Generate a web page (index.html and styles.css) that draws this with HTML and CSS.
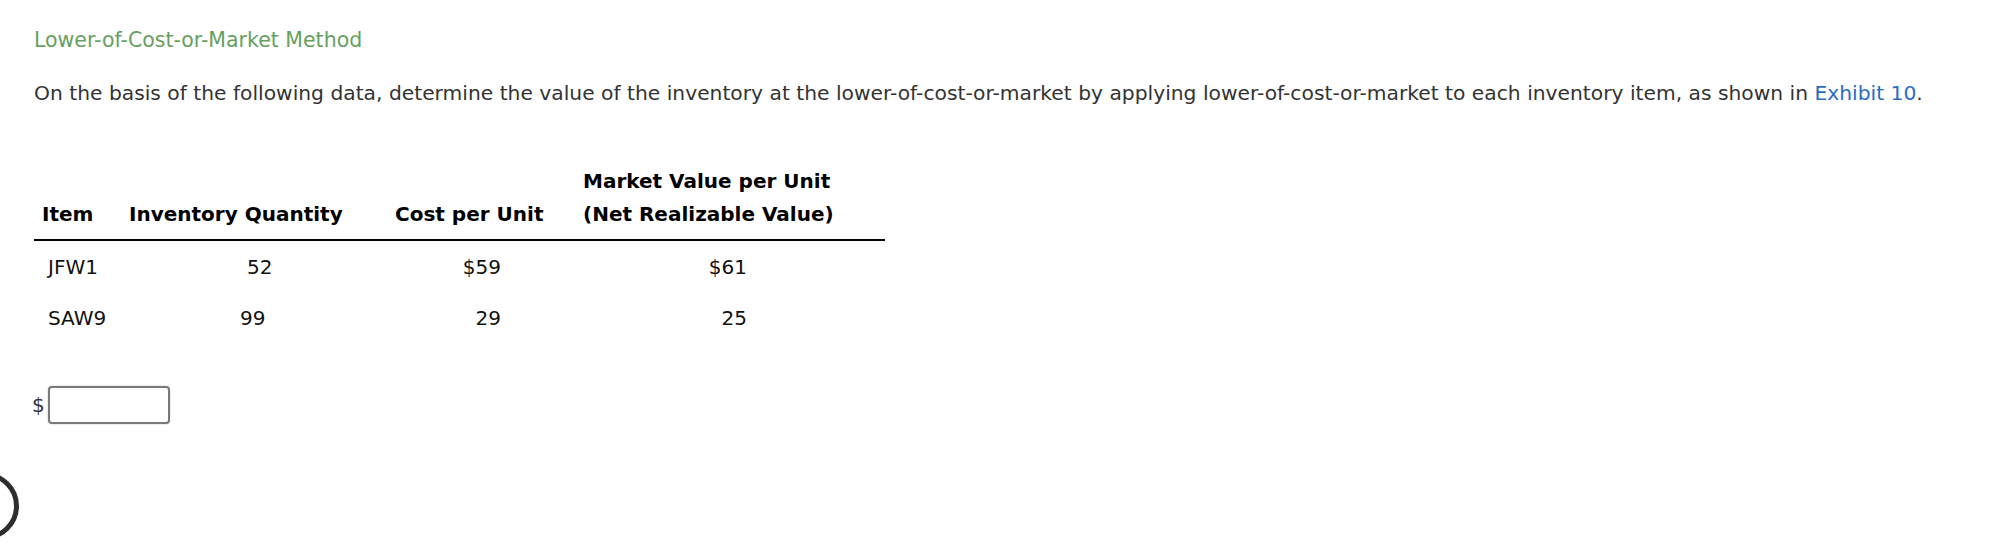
FILE: index.html
```html
<!DOCTYPE html>
<html lang="en">
<head>
<meta charset="utf-8">
<title>Lower-of-Cost-or-Market Method</title>
<link rel="stylesheet" href="styles.css">
</head>
<body>
<div class="page">
  <h1 class="title">Lower-of-Cost-or-Market Method</h1>
  <p class="prompt">On the basis of the following data, determine the value of the inventory at the lower-of-cost-or-market by applying lower-of-cost-or-market to each inventory item, as shown in <a class="link" href="#">Exhibit 10</a>.</p>

  <table class="data">
    <colgroup>
      <col class="col-item">
      <col class="col-qty">
      <col class="col-cost">
      <col class="col-mkt">
    </colgroup>
    <thead>
      <tr>
        <th>Item</th>
        <th>Inventory Quantity</th>
        <th>Cost per Unit</th>
        <th>Market Value per Unit<br>(Net Realizable Value)</th>
      </tr>
    </thead>
    <tbody>
      <tr>
        <td class="c-item">JFW1</td>
        <td class="c-qty">52</td>
        <td class="c-cost">$59</td>
        <td class="c-mkt">$61</td>
      </tr>
      <tr>
        <td class="c-item">SAW9</td>
        <td class="c-qty c-qty--alt">99</td>
        <td class="c-cost">29</td>
        <td class="c-mkt">25</td>
      </tr>
    </tbody>
  </table>

  <div class="answer">
    <span class="currency">$</span>
    <input class="answer-input" type="text" aria-label="Inventory value">
  </div>
</div>
<div class="ring"></div>
</body>
</html>
```

FILE: styles.css
```css
html, body {
  margin: 0;
  padding: 0;
  background: #ffffff;
}

body {
  font-family: "DejaVu Sans", Verdana, sans-serif;
  color: #333333;
  width: 1990px;
  height: 550px;
  overflow: hidden;
  position: relative;
}

.page {
  padding: 28px 0 0 34px;
}

.title {
  margin: 0 0 29px 0;
  font-size: 20.5px;
  line-height: 24px;
  font-weight: normal;
  color: #67a05f;
}

.prompt {
  margin: 0;
  font-size: 20.25px;
  line-height: 24px;
  color: #333333;
  white-space: nowrap;
}

.link {
  color: #2a6bc4;
  text-decoration: none;
}

.data {
  margin: 60px 0 0 0;
  border-collapse: collapse;
  table-layout: fixed;
  width: 851px;
  color: #000000;
  font-size: 20px;
}

.col-item { width: 87px; }
.col-qty { width: 266px; }
.col-cost { width: 188px; }
.col-mkt { width: 310px; }

.data th,
.data td {
  box-sizing: border-box;
}

.data th {
  font-weight: bold;
  line-height: 33px;
  text-align: left;
  vertical-align: bottom;
  padding: 0 0 8px 8px;
  border-bottom: 2px solid #000000;
}

.data td {
  line-height: 24px;
  padding: 14px 0 13px 0;
  color: #111111;
}

.data td.c-item { padding-left: 14px; }
.data td.c-qty { padding-left: 126px; }
.data td.c-qty--alt { padding-left: 119px; }
.data td.c-cost { text-align: right; padding-right: 74px; }
.data td.c-mkt { text-align: right; padding-right: 138px; }

.answer {
  margin: 43px 0 0 -2px;
  display: flex;
  align-items: center;
}

.currency {
  font-size: 20px;
  color: #333333;
  line-height: 20px;
}

.answer-input {
  box-sizing: border-box;
  width: 122px;
  height: 38px;
  margin: 0 0 0 3px;
  border: 2px solid #7a7a7a;
  border-radius: 4px;
  box-shadow: 0 0 2px rgba(0, 0, 0, 0.25);
  background: #ffffff;
  padding: 0 6px;
  font-size: 16px;
}

.ring {
  position: absolute;
  left: -49px;
  top: 472px;
  width: 58px;
  height: 58px;
  border: 5px solid #2e2e2e;
  border-radius: 50%;
}
```
